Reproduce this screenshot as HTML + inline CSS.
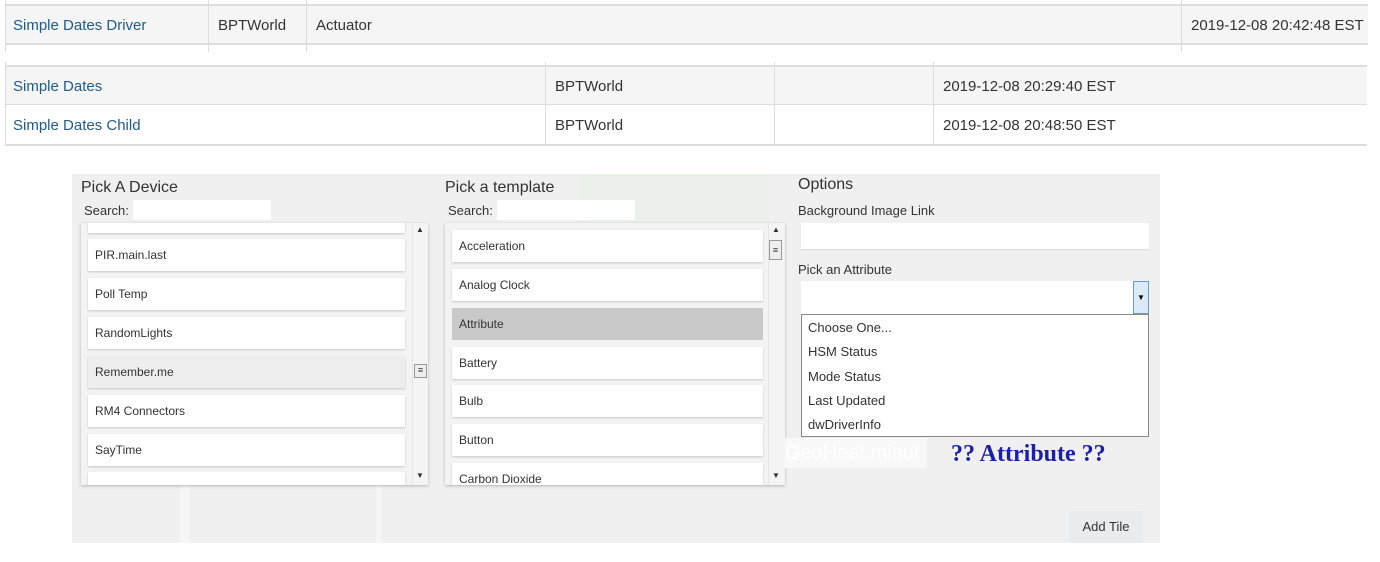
<!DOCTYPE html><html><head><style>
*{box-sizing:border-box;margin:0;padding:0}
body{width:1380px;height:562px;background:#fff;font-family:"Liberation Sans",sans-serif;position:relative;overflow:hidden;color:#333}
.a{position:absolute}
.cell{position:absolute;font-size:15px;line-height:38px;padding-left:8px;white-space:nowrap}
.lnk{color:#1f5b8a}
.vl{position:absolute;width:1px;background:#ddd}
.hl{position:absolute;height:2px;background:#ddd}
.item{position:absolute;background:#fff;height:32px;font-size:12px;line-height:33px;padding-left:7px;box-shadow:0 1px 2px rgba(0,0,0,.18);color:#333}
.sb{position:absolute;background:#f4f4f4;border-left:1px solid #e6e6e6}
.lbl{position:absolute;font-size:13px;color:#333}
</style></head><body>
<!-- table 1 -->
<div class="a" style="left:5px;top:6px;width:1363px;height:38px;background:#f5f5f5"></div>
<div class="hl" style="left:5px;top:4px;width:1363px"></div>
<div class="hl" style="left:5px;top:43px;width:1363px"></div>
<div class="vl" style="left:5px;top:0;height:52px"></div>
<div class="vl" style="left:208px;top:0;height:52px"></div>
<div class="vl" style="left:306px;top:0;height:52px"></div>
<div class="vl" style="left:1181px;top:0;height:52px"></div>
<div class="cell lnk" style="left:5px;top:7px">Simple Dates Driver</div>
<div class="cell" style="left:210px;top:7px">BPTWorld</div>
<div class="cell" style="left:308px;top:7px">Actuator</div>
<div class="cell" style="left:1183px;top:7px">2019-12-08 20:42:48 EST</div>
<!-- table 2 -->
<div class="a" style="left:5px;top:67px;width:1362px;height:38px;background:#f5f5f5"></div>
<div class="hl" style="left:5px;top:65px;width:1362px"></div>
<div class="hl" style="left:5px;top:104px;width:1362px;height:1px"></div>
<div class="hl" style="left:5px;top:144px;width:1362px"></div>
<div class="vl" style="left:5px;top:62px;height:84px"></div>
<div class="vl" style="left:545px;top:62px;height:84px"></div>
<div class="vl" style="left:774px;top:62px;height:84px"></div>
<div class="vl" style="left:933px;top:62px;height:84px"></div>
<div class="cell lnk" style="left:5px;top:68px">Simple Dates</div>
<div class="cell" style="left:547px;top:68px">BPTWorld</div>
<div class="cell" style="left:935px;top:68px">2019-12-08 20:29:40 EST</div>
<div class="cell lnk" style="left:5px;top:107px">Simple Dates Child</div>
<div class="cell" style="left:547px;top:107px">BPTWorld</div>
<div class="cell" style="left:935px;top:107px">2019-12-08 20:48:50 EST</div>
<!-- panel -->
<div class="a" style="left:72px;top:174px;width:1088px;height:369px;background:#f0f0f0"></div>
<div class="a" style="left:578px;top:174px;width:190px;height:50px;background:#ebf0eb"></div>
<div class="a" style="left:180px;top:485px;width:10px;height:58px;background:#f6f6f6"></div>
<div class="a" style="left:376px;top:485px;width:6px;height:58px;background:#f6f6f6"></div>
<div class="a" style="left:81px;top:179px;font-size:16px;color:#333">Pick A Device</div>
<div class="lbl" style="left:84px;top:203px">Search:</div>
<div class="a" style="left:133px;top:200px;width:138px;height:20px;background:#fff"></div>
<div class="a" style="left:445px;top:179px;font-size:16px;color:#333">Pick a template</div>
<div class="lbl" style="left:448px;top:203px">Search:</div>
<div class="a" style="left:497px;top:200px;width:138px;height:20px;background:#fff"></div>
<!-- device list -->
<div class="a" style="left:81px;top:223px;width:347px;height:262px;background:#f3f3f3;box-shadow:0 1px 3px rgba(0,0,0,.25);overflow:hidden">
<div class="item" style="left:7px;top:-22px;width:317px"></div>
<div class="item" style="left:7px;top:16px;width:317px">PIR.main.last</div>
<div class="item" style="left:7px;top:55px;width:317px">Poll Temp</div>
<div class="item" style="left:7px;top:94px;width:317px">RandomLights</div>
<div class="item" style="left:7px;top:133px;width:317px;background:#eee">Remember.me</div>
<div class="item" style="left:7px;top:172px;width:317px">RM4 Connectors</div>
<div class="item" style="left:7px;top:211px;width:317px">SayTime</div>
<div class="item" style="left:7px;top:249px;width:317px"></div>
<div class="sb" style="left:331px;top:0;width:16px;height:262px"></div>
<div class="a" style="left:335px;top:2px;font-size:8px;color:#333">▲</div>
<div class="a" style="left:335px;top:248px;font-size:8px;color:#333">▼</div>
<div class="a" style="left:333px;top:141px;width:13px;height:14px;background:#eee;border:1px solid #999;font-size:9px;line-height:11px;text-align:center">≡</div>
</div>
<!-- template list -->
<div class="a" style="left:445px;top:223px;width:340px;height:262px;background:#f3f3f3;box-shadow:0 1px 3px rgba(0,0,0,.25);overflow:hidden">
<div class="item" style="left:7px;top:7px;width:311px">Acceleration</div>
<div class="item" style="left:7px;top:46px;width:311px">Analog Clock</div>
<div class="item" style="left:7px;top:85px;width:311px;background:#c9c9c9;box-shadow:none">Attribute</div>
<div class="item" style="left:7px;top:124px;width:311px">Battery</div>
<div class="item" style="left:7px;top:162px;width:311px">Bulb</div>
<div class="item" style="left:7px;top:201px;width:311px">Button</div>
<div class="item" style="left:7px;top:240px;width:311px">Carbon Dioxide</div>
<div class="sb" style="left:323px;top:0;width:17px;height:262px"></div>
<div class="a" style="left:327px;top:2px;font-size:8px;color:#333">▲</div>
<div class="a" style="left:327px;top:248px;font-size:8px;color:#333">▼</div>
<div class="a" style="left:324px;top:17px;width:13px;height:20px;background:#eee;border:1px solid #999;font-size:9px;line-height:18px;text-align:center">≡</div>
</div>
<!-- options -->
<div class="a" style="left:798px;top:176px;font-size:16px;color:#333">Options</div>
<div class="lbl" style="left:798px;top:203px">Background Image Link</div>
<div class="a" style="left:801px;top:223px;width:348px;height:26px;background:#fff;box-shadow:0 1px 1px rgba(0,0,0,.1)"></div>
<div class="lbl" style="left:798px;top:262px">Pick an Attribute</div>
<div class="a" style="left:801px;top:281px;width:348px;height:34px;background:#fff"></div>
<div class="a" style="left:1133px;top:281px;width:16px;height:33px;background:#dbeaf7;border:1px solid #6e9bc3;font-size:8px;line-height:31px;text-align:center;color:#000">▼</div>
<div class="a" style="left:801px;top:314px;width:348px;height:123px;background:#fff;border:1px solid #888;font-size:13px;line-height:24.3px;padding:1px 0 0 6px;color:#333">Choose One...<br>HSM Status<br>Mode Status<br>Last Updated<br>dwDriverInfo</div>
<div class="a" style="left:785px;top:438px;width:142px;height:30px;background:#f8f8f8;color:#fff;font-size:20px;line-height:30px">GeoHeat.minut</div>
<div class="a" style="left:951px;top:441px;font-family:'Liberation Serif',serif;font-weight:bold;font-size:24px;color:#1c1fa8">?? Attribute ??</div>
<div class="a" style="left:1069px;top:511px;width:74px;height:32px;background:#e8ecee;font-size:13px;line-height:32px;text-align:center;color:#333">Add Tile</div>
</body></html>
